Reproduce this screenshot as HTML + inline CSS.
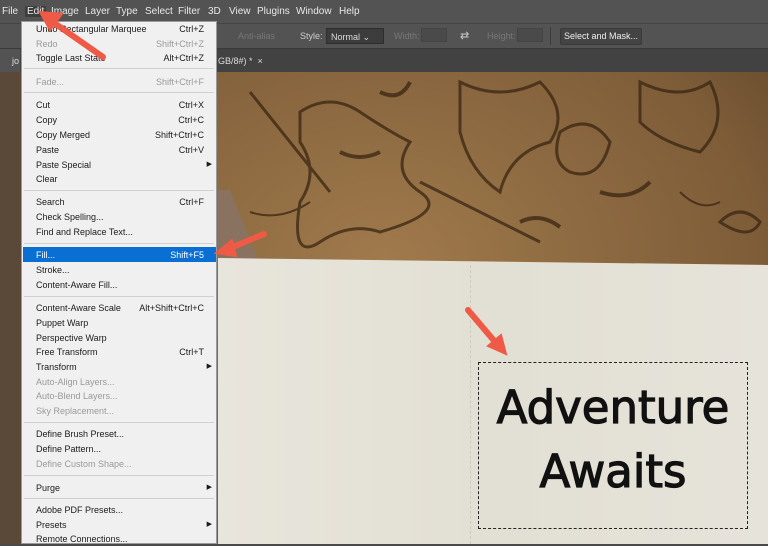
<!DOCTYPE html><html><head><style>
*{margin:0;padding:0;box-sizing:border-box}
body{width:768px;height:544px;overflow:hidden;position:relative;background:#4a4a4a;font-family:"Liberation Sans",sans-serif;font-size:9px}
.abs{position:absolute}
#menubar{left:0;top:0;width:768px;height:23px;background:#535353;color:#e8e8e8;font-size:10px}
#menubar span{position:absolute;top:6px}
#opts{left:0;top:23px;width:768px;height:25px;background:#535353;border-top:1px solid #444;color:#9a9a9a}
#tabs{left:0;top:48px;width:768px;height:24px;background:#424242;border-top:1px solid #3a3a3a}
#canvas{left:0;top:72px;width:768px;height:472px;background:radial-gradient(ellipse at 50% 40%,#a07a4c,#7d5c38 70%,#5e4428)}
#paper{left:218px;top:255px;width:550px;height:289px;background:linear-gradient(90deg,#e8e5dc,#e2dfd4 50%,#e6e3da);clip-path:polygon(0 3px,100% 10px,100% 100%,0 100%)}
#menu{left:21px;top:21px;width:196px;height:523px;background:#f0f0f0;border:1px solid #9a9a9a;color:#1a1a1a;font-size:9px}
.it{position:absolute;left:14px;width:180px;height:14px;line-height:14px}
.it b{position:absolute;right:12px;font-weight:normal}
.dis{color:#9a9a9a}
.sep{position:absolute;left:2px;width:190px;height:1px;background:#d0d0d0}
.arr{position:absolute;right:4px;font-size:7px}
</style></head><body>
<div id="menubar" class="abs">
<span style="left:2px">File</span><span style="left:25px;background:#3d3d3d;padding:0 2px">Edit</span><span style="left:51px">Image</span><span style="left:85px">Layer</span><span style="left:116px">Type</span><span style="left:145px">Select</span><span style="left:178px">Filter</span><span style="left:208px">3D</span><span style="left:229px">View</span><span style="left:257px">Plugins</span><span style="left:296px">Window</span><span style="left:339px">Help</span>
</div>
<div id="opts" class="abs">
<div class="abs" style="left:238px;top:7px;color:#777">Anti-alias</div>
<div class="abs" style="left:300px;top:7px;color:#ccc">Style:</div>
<div class="abs" style="left:326px;top:4px;width:58px;height:16px;background:#3c3c3c;border:1px solid #2e2e2e;color:#ddd;padding:3px 4px">Normal ⌄</div>
<div class="abs" style="left:394px;top:7px;color:#777">Width:</div>
<div class="abs" style="left:421px;top:4px;width:26px;height:14px;background:#4a4a4a;border:1px solid #444"></div>
<div class="abs" style="left:460px;top:5px;color:#ccc;font-size:11px">⇄</div>
<div class="abs" style="left:487px;top:7px;color:#777">Height:</div>
<div class="abs" style="left:517px;top:4px;width:26px;height:14px;background:#4a4a4a;border:1px solid #444"></div>
<div class="abs" style="left:550px;top:3px;width:1px;height:18px;background:#3c3c3c"></div>
<div class="abs" style="left:560px;top:4px;width:82px;height:17px;background:#444;border:1px solid #3a3a3a;border-radius:2px;color:#eee;text-align:center;line-height:15px">Select and Mask...</div>
</div>
<div id="tabs" class="abs"><div class="abs" style="left:0;top:0;width:20px;height:24px;background:#535353"></div><div class="abs" style="left:12px;top:7px;color:#ddd">jo</div><div class="abs" style="left:218px;top:7px;color:#ddd">GB/8#) * &nbsp;×</div></div>
<div id="canvas" class="abs">
<svg width="768" height="472" style="position:absolute;left:0;top:0" fill="none" stroke="#3a2612" stroke-width="3" opacity=".75">
<path d="M300 40 q30-20 60 0 t50 30 q-20 30 10 50 t-40 40 q-30-10-60 10 t-20-40 q20-30 0-60z"/>
<path d="M460 10 q40 20 80 0 q30 30 10 60 q-40 10-50 50 q-30-20-40-60z"/>
<path d="M560 60 q30-20 50 10 q-10 40-40 30 q-20-10-10-40z"/>
<path d="M640 10 q40 20 70 0 q20 40 -10 70 q-40-10-60-30z"/>
<path d="M250 20 l80 100 M420 110 l120 60"/>
<path d="M720 150 q20-20 40 0 q-10 20-40 0z"/>
<path d="M340 80 q20 10 40 0 M380 20 q20 10 30-10 M600 120 q30 10 50-10 M520 150 q20-10 40 5" stroke-width="4"/>
<path d="M250 140 q30 10 60-10 M680 120 q20 20 40 10" stroke-width="2"/>
</svg>
<div class="abs" style="left:0;top:0;width:21px;height:472px;background:#5a4838"></div>
<div class="abs" style="left:218px;top:118px;width:40px;height:70px;background:#8a7260;clip-path:polygon(0 0,30% 0,100% 100%,0 100%)"></div>
</div>
<div id="paper" class="abs"></div>
<div class="abs" style="left:470px;top:265px;width:1px;height:279px;border-left:1px dashed #cfcbbe"></div>
<div class="abs" style="left:478px;top:362px;width:270px;height:167px;border:1px dashed #222"></div>
<div class="abs" style="left:478px;top:376px;width:270px;text-align:center;font-size:45px;line-height:64px;color:#111;font-family:'DejaVu Sans',sans-serif;-webkit-text-stroke:1.2px #111">Adventure<br>Awaits</div>
<div id="menu" class="abs">
<div class="it" style="top:0">Undo Rectangular Marquee<b>Ctrl+Z</b></div>
<div class="it dis" style="top:15px">Redo<b>Shift+Ctrl+Z</b></div>
<div class="it" style="top:29px">Toggle Last State<b>Alt+Ctrl+Z</b></div>
<div class="sep" style="top:46px"></div>
<div class="it dis" style="top:53px">Fade...<b>Shift+Ctrl+F</b></div>
<div class="sep" style="top:70px"></div>
<div class="it" style="top:76px">Cut<b>Ctrl+X</b></div>
<div class="it" style="top:91px">Copy<b>Ctrl+C</b></div>
<div class="it" style="top:106px">Copy Merged<b>Shift+Ctrl+C</b></div>
<div class="it" style="top:121px">Paste<b>Ctrl+V</b></div>
<div class="it" style="top:136px">Paste Special<span class="arr">▶</span></div>
<div class="it" style="top:150px">Clear</div>
<div class="sep" style="top:168px"></div>
<div class="it" style="top:173px">Search<b>Ctrl+F</b></div>
<div class="it" style="top:188px">Check Spelling...</div>
<div class="it" style="top:203px">Find and Replace Text...</div>
<div class="sep" style="top:221px"></div>
<div class="abs" style="left:1px;top:225px;width:193px;height:15px;background:#0a6fd3"></div>
<div class="it" style="top:226px;color:#fff">Fill...<b>Shift+F5</b></div>
<div class="it" style="top:241px">Stroke...</div>
<div class="it" style="top:256px">Content-Aware Fill...</div>
<div class="sep" style="top:274px"></div>
<div class="it" style="top:279px">Content-Aware Scale<b>Alt+Shift+Ctrl+C</b></div>
<div class="it" style="top:294px">Puppet Warp</div>
<div class="it" style="top:309px">Perspective Warp</div>
<div class="it" style="top:323px">Free Transform<b>Ctrl+T</b></div>
<div class="it" style="top:338px">Transform<span class="arr">▶</span></div>
<div class="it dis" style="top:353px">Auto-Align Layers...</div>
<div class="it dis" style="top:367px">Auto-Blend Layers...</div>
<div class="it dis" style="top:382px">Sky Replacement...</div>
<div class="sep" style="top:400px"></div>
<div class="it" style="top:405px">Define Brush Preset...</div>
<div class="it" style="top:420px">Define Pattern...</div>
<div class="it dis" style="top:435px">Define Custom Shape...</div>
<div class="sep" style="top:453px"></div>
<div class="it" style="top:459px">Purge<span class="arr">▶</span></div>
<div class="sep" style="top:476px"></div>
<div class="it" style="top:481px">Adobe PDF Presets...</div>
<div class="it" style="top:496px">Presets<span class="arr">▶</span></div>
<div class="it" style="top:510px">Remote Connections...</div>
</div>
<svg width="768" height="544" style="position:absolute;left:0;top:0">
<g stroke="#ee5a45" stroke-width="6" stroke-linecap="round" fill="#ee5a45">
<line x1="103" y1="57" x2="50" y2="20"/><polygon points="40,12 62,14 50,30" stroke-width="2"/>
<line x1="264" y1="234" x2="228" y2="249"/><polygon points="216,253 232,240 236,256" stroke-width="2"/>
<line x1="468" y1="310" x2="496" y2="343"/><polygon points="506,354 488,346 501,335" stroke-width="2"/>
</g></svg>
</body></html>
